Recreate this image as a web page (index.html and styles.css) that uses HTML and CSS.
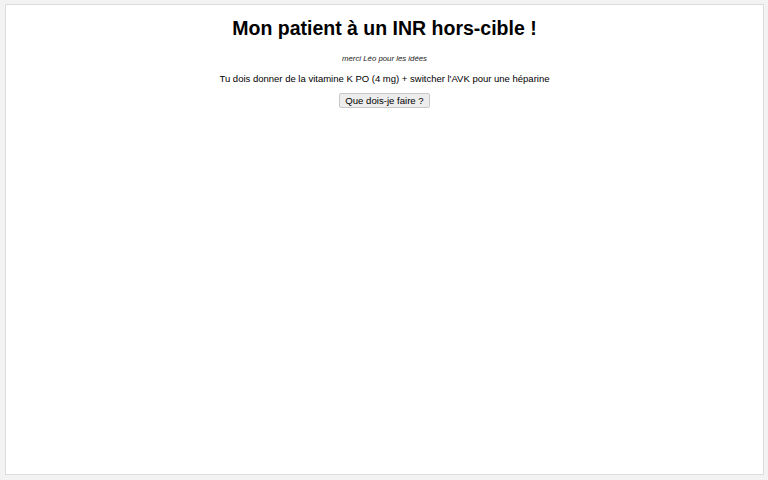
FILE: index.html
```html
<!DOCTYPE html>
<html lang="fr">
<head>
<meta charset="utf-8">
<title>INR hors-cible</title>
<link rel="stylesheet" href="styles.css">
</head>
<body>
<main class="card">
  <h1 class="title">Mon patient à un INR hors-cible !</h1>
  <p class="thanks">merci Léo pour les idées</p>
  <p class="answer">Tu dois donner de la vitamine K PO (4 mg) + switcher l'AVK pour une héparine</p>
  <button class="btn" type="button">Que dois-je faire ?</button>
</main>
</body>
</html>
```
FILE: styles.css
```css
html, body {
  margin: 0;
  height: 100%;
}
body {
  background: #f3f3f3;
  font-family: "Liberation Sans", Arial, sans-serif;
  color: #000;
  padding: 4px 4px 4px 5px;
  box-sizing: border-box;
}
.card {
  background: #fff;
  border: 1px solid #dcdcdc;
  height: 471px;
  box-sizing: border-box;
  display: flex;
  flex-direction: column;
  align-items: center;
  text-align: center;
}
.title {
  font-size: 19.5px;
  font-weight: bold;
  margin: 12px 0 0;
  line-height: 23px;
}
.thanks {
  font-size: 7.8px;
  font-style: italic;
  margin: 14px 0 0;
  line-height: 10px;
  color: #222;
}
.answer {
  font-size: 9.5px;
  margin: 9px 0 0;
  line-height: 12px;
}
.btn {
  margin-top: 8px;
  font-family: "Liberation Sans", Arial, sans-serif;
  font-size: 9.6px;
  line-height: 11px;
  padding: 1px 5px;
  background: #ededed;
  border: 1px solid #c8c8c8;
  border-radius: 2px;
  color: #000;
}
```
